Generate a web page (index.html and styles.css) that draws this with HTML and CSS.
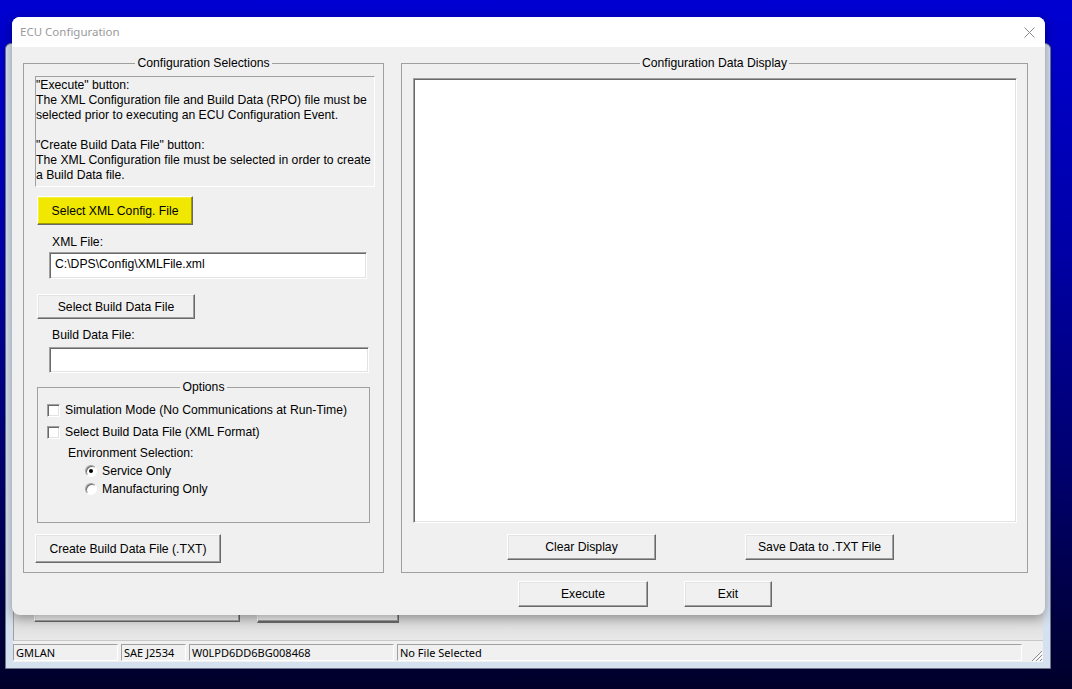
FILE: index.html
```html
<!DOCTYPE html>
<html lang="en">
<head>
    <meta charset="UTF-8">
    <title>ECU Configuration</title>
    <link rel="stylesheet" href="styles.css">
</head>
<body>

    <div class="main-window">
        <div class="main-client">
            <div class="main-panel">
                <button type="button" class="btn under-btn under-btn-a"></button>
                <button type="button" class="btn under-btn under-btn-b"></button>
            </div>
            <div class="status-bar">
                <div class="status-cell cell-bus">GMLAN</div>
                <div class="status-cell cell-api">SAE J2534</div>
                <div class="status-cell cell-vin">W0LPD6DD6BG008468</div>
                <div class="status-cell cell-file">No File Selected</div>
                <div class="grip">
                    <svg width="12" height="12" viewBox="0 0 12 12">
                        <path d="M11 1 L1 11 M11 5 L5 11 M11 9 L9 11" stroke="#8c8c8c" stroke-width="1"/>
                        <path d="M12 2 L2 12 M12 6 L6 12 M12 10 L10 12" stroke="#ffffff" stroke-width="1"/>
                    </svg>
                </div>
            </div>
        </div>
    </div>

    <div class="dialog">
        <div class="title-bar">
            <span class="title">ECU Configuration</span>
            <svg class="close" width="11" height="11" viewBox="0 0 11 11">
                <path d="M0.5 0.5 L10.5 10.5 M10.5 0.5 L0.5 10.5" stroke="#8a8a8a" stroke-width="1"/>
            </svg>
        </div>

        <div class="dialog-body">
            <div class="groups">
                <fieldset class="group group-left">
                    <legend>Configuration Selections</legend>

                    <div class="info-box">
                        "Execute" button:<br>
                        The XML Configuration file and Build Data (RPO) file must be<br>
                        selected prior to executing an ECU Configuration Event.<br>
                        <br>
                        "Create Build Data File" button:<br>
                        The XML Configuration file must be selected in order to create<br>
                        a Build Data file.
                    </div>

                    <button type="button" class="btn btn-xml">Select XML Config. File</button>
                    <div class="field-label label-xml">XML File:</div>
                    <div class="text-field field-xml">C:\DPS\Config\XMLFile.xml</div>

                    <button type="button" class="btn btn-build">Select Build Data File</button>
                    <div class="field-label label-build">Build Data File:</div>
                    <div class="text-field field-build"></div>

                    <fieldset class="group options">
                        <legend>Options</legend>
                        <div class="check-row row-sim">
                            <span class="checkbox"></span>
                            <span>Simulation Mode (No Communications at Run-Time)</span>
                        </div>
                        <div class="check-row row-xmlfmt">
                            <span class="checkbox"></span>
                            <span>Select Build Data File (XML Format)</span>
                        </div>
                        <div class="env-label">Environment Selection:</div>
                        <div class="radio-row row-service">
                            <span class="radio checked"></span>
                            <span>Service Only</span>
                        </div>
                        <div class="radio-row row-mfg">
                            <span class="radio"></span>
                            <span>Manufacturing Only</span>
                        </div>
                    </fieldset>

                    <button type="button" class="btn btn-create">Create Build Data File (.TXT)</button>
                </fieldset>

                <fieldset class="group group-right">
                    <legend>Configuration Data Display</legend>
                    <div class="display-box"></div>
                    <div class="display-actions">
                        <button type="button" class="btn btn-display">Clear Display</button>
                        <button type="button" class="btn btn-display">Save Data to .TXT File</button>
                    </div>
                </fieldset>
            </div>

            <div class="dialog-actions">
                <button type="button" class="btn btn-execute">Execute</button>
                <button type="button" class="btn btn-exit">Exit</button>
            </div>
        </div>
    </div>

</body>
</html>
```

FILE: styles.css
```css
body {
    margin: 0;
    width: 1072px;
    height: 689px;
    overflow: hidden;
    position: relative;
    background: linear-gradient(to bottom, #0000d2 0%, #0000a8 35%, #00006a 70%, #00002a 100%);
    font-family: "Liberation Sans", Arial, sans-serif;
    font-size: 12.2px;
    color: #000;
}

/* buttons */
.btn {
    display: flex;
    align-items: center;
    justify-content: center;
    box-sizing: border-box;
    padding: 0;
    margin: 0;
    font-family: "Liberation Sans", Arial, sans-serif;
    font-size: 12.2px;
    color: #000;
    background: #f0f0f0;
    border: 1px solid;
    border-color: #fff #696969 #696969 #fff;
    box-shadow: inset -1px -1px 0 #a0a0a0, inset 1px 1px 0 #e3e3e3;
}

/* window underneath the dialog */
.main-window {
    position: absolute;
    left: 5px;
    top: 43px;
    width: 1046px;
    height: 626px;
    box-sizing: border-box;
    border: 1px solid #6d7686;
    border-radius: 6px 6px 0 0;
    background: #d5e1ee;
    padding: 0 7px 6px 7px;
}

.main-client {
    height: 100%;
    display: flex;
    flex-direction: column;
    background: #f0f0f0;
}

.main-panel {
    flex: 1;
    display: flex;
    align-items: flex-end;
    border-left: 1px solid #a0a0a0;
    border-bottom: 1px solid #c8c8c8;
    background: linear-gradient(to bottom, #f0f0f0 0%, #f0f0f0 94%, #d6d6d6 95.5%, #e9e9e9 100%);
    padding-bottom: 17px;
}

.under-btn {
    height: 30px;
}

.under-btn-a {
    width: 206px;
    margin: 0 0 1px 20px;
}

.under-btn-b {
    width: 142px;
    margin-left: 17px;
    border-bottom-width: 2px;
}

.status-bar {
    height: 18px;
    margin-top: 3px;
    display: flex;
    gap: 3px;
    font-family: "Noto Sans", "DejaVu Sans", sans-serif;
    font-size: 11px;
}

.status-cell {
    box-sizing: border-box;
    height: 17px;
    line-height: 15px;
    padding-left: 2px;
    border: 1px solid;
    border-color: #a0a0a0 #fff #fff #a0a0a0;
    white-space: nowrap;
    overflow: hidden;
}

.cell-bus { width: 105px; }
.cell-api { width: 65px; }
.cell-vin { width: 205px; }
.cell-file { width: 625px; }

.grip {
    flex: 1;
    display: flex;
    justify-content: flex-end;
    align-items: flex-end;
}

/* dialog */
.dialog {
    position: absolute;
    left: 12px;
    top: 17px;
    width: 1033px;
    height: 598px;
    border-radius: 8px;
    background: #f0f0f0;
    box-shadow: 0 3px 12px rgba(0, 0, 0, 0.35);
    display: flex;
    flex-direction: column;
}

.title-bar {
    height: 30px;
    flex: none;
    background: #fff;
    border-radius: 8px 8px 0 0;
    display: flex;
    align-items: center;
    justify-content: space-between;
    padding: 0 10px 0 8px;
}

.title {
    font-family: "Noto Sans", "DejaVu Sans", sans-serif;
    font-size: 11.5px;
    color: #9a9a9a;
    margin-top: -1px;
}

.close {
    margin-top: 1px;
}

.dialog-body {
    flex: 1;
    padding: 0 17px 0 11px;
}

.groups {
    display: flex;
    gap: 17px;
    height: 517px;
    margin-top: 9px;
}

.group {
    box-sizing: border-box;
    margin: 0;
    min-width: 0;
    border: 1px solid #a0a0a0;
    padding: 0;
}

.group legend {
    margin: 0 auto;
    padding: 0 2px;
    line-height: 14px;
    font-size: 12.2px;
}

.group-left {
    width: 361px;
    height: 517px;
    padding: 0 11px;
}

.group-right {
    width: 627px;
    height: 517px;
    padding: 0 11px;
}

.info-box {
    box-sizing: border-box;
    width: 340px;
    height: 111px;
    margin-top: 6px;
    padding: 1px 0 0 0;
    line-height: 15px;
    border: 1px solid;
    border-color: #a0a0a0 #fff #fff #a0a0a0;
    white-space: nowrap;
    overflow: hidden;
}

.btn-xml {
    width: 156px;
    height: 29px;
    margin: 9px 0 0 2px;
    background: #f0e800;
    box-shadow: inset -1px -1px 0 #a09a00, inset 1px 1px 0 #f6ef40;
}

.field-label {
    line-height: 14px;
    margin-left: 17px;
}

.label-xml { margin-top: 10px; }
.label-build { margin-top: 9px; }

.text-field {
    box-sizing: border-box;
    background: #fff;
    border: 1px solid;
    border-color: #a0a0a0 #fff #fff #a0a0a0;
    box-shadow: inset 1px 1px 0 #696969, inset -1px -1px 0 #e3e3e3;
    margin-left: 14px;
    padding-left: 5px;
    line-height: 22px;
}

.field-xml {
    width: 318px;
    height: 27px;
    margin-top: 3px;
}

.field-build {
    width: 320px;
    height: 26px;
    margin-top: 5px;
}

.btn-build {
    width: 158px;
    height: 25px;
    margin: 15px 0 0 2px;
}

.options {
    width: 333px;
    height: 143px;
    margin: 7px 0 0 2px;
    padding: 0 9px;
}

.check-row,
.radio-row {
    display: flex;
    align-items: center;
    line-height: 14px;
    height: 14px;
    gap: 5px;
    white-space: nowrap;
}

.row-sim { margin-top: 9px; }
.row-xmlfmt { margin-top: 8px; }

.checkbox {
    box-sizing: border-box;
    flex: none;
    width: 13px;
    height: 13px;
    background: #fff;
    border: 1px solid;
    border-color: #a0a0a0 #fff #fff #a0a0a0;
    box-shadow: inset 1px 1px 0 #696969, inset -1px -1px 0 #e3e3e3;
}

.env-label {
    line-height: 14px;
    margin: 7px 0 0 21px;
}

.radio-row {
    margin: 4px 0 0 38px;
}

.radio {
    box-sizing: border-box;
    flex: none;
    width: 12px;
    height: 12px;
    border-radius: 50%;
    background: #fff;
    border: 1px solid;
    border-color: #a0a0a0 #fff #fff #a0a0a0;
    box-shadow: inset 1px 1px 0 #696969;
    display: flex;
    align-items: center;
    justify-content: center;
}

.radio.checked::after {
    content: "";
    width: 4px;
    height: 4px;
    border-radius: 50%;
    background: #000;
}

.btn-create {
    width: 186px;
    height: 29px;
    margin-top: 11px;
}

.display-box {
    box-sizing: border-box;
    width: 604px;
    height: 445px;
    margin-top: 8px;
    background: #fff;
    border: 1px solid;
    border-color: #a0a0a0 #fff #fff #a0a0a0;
    box-shadow: inset 1px 1px 0 #696969, inset -1px -1px 0 #e3e3e3;
}

.display-actions {
    display: flex;
    gap: 89px;
    margin-top: 11px;
    padding-left: 94px;
}

.btn-display {
    width: 149px;
    height: 26px;
}

.dialog-actions {
    display: flex;
    gap: 36px;
    margin-top: 8px;
    padding-left: 495px;
}

.btn-execute {
    width: 130px;
    height: 26px;
}

.btn-exit {
    width: 88px;
    height: 26px;
}
```
